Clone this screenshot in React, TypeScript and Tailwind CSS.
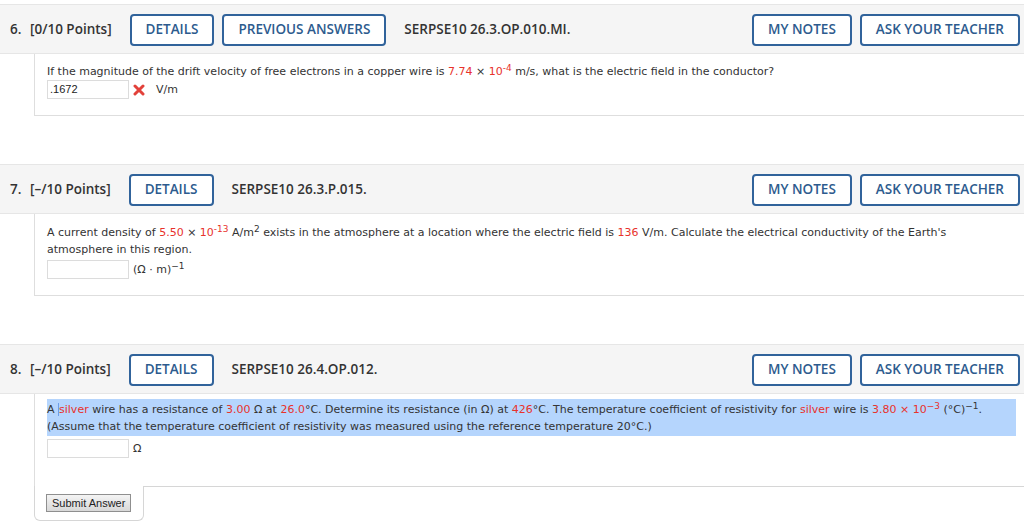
import React from "react";

const body = { fontFamily: '"DejaVu Sans", Verdana, sans-serif' };
const head = { fontFamily: '"Open Sans", "Liberation Sans", sans-serif' };

function NavButton({ label }: { label: string }) {
  return (
    <button
      className="h-[32px] px-[14px] pt-[1px] rounded-[4px] border-2 border-[#31639b] bg-white text-[13.5px] font-semibold text-[#2d5b8e] leading-none"
      style={head}
    >
      {label}
    </button>
  );
}

function Header({
  num,
  points,
  code,
  previous,
}: {
  num: string;
  points: string;
  code: string;
  previous?: boolean;
}) {
  return (
    <div
      className="h-[50px] flex items-center bg-[#f5f5f5] border-t border-b border-[#e6e6e6] pl-[10px] pr-[4px] pt-[1px] text-[#333]"
      style={head}
    >
      <span className="text-[13.5px] font-semibold w-[20px]">{num}</span>
      <span className="text-[13.5px] font-semibold">{points}</span>
      <div className="ml-[18px] flex gap-[8px]">
        <NavButton label="DETAILS" />
        {previous && <NavButton label="PREVIOUS ANSWERS" />}
      </div>
      <span className="ml-[18px] text-[13.5px] font-semibold">{code}</span>
      <div className="ml-auto flex gap-[8px]">
        <NavButton label="MY NOTES" />
        <NavButton label="ASK YOUR TEACHER" />
      </div>
    </div>
  );
}

function Red({ children }: { children: React.ReactNode }) {
  return <span className="text-[#e8322b]">{children}</span>;
}

function Sup({ children, red }: { children: React.ReactNode; red?: boolean }) {
  return <sup className={`text-[9px] ${red ? "text-[#e8322b]" : ""}`}>{children}</sup>;
}

function AnswerBox({ value }: { value?: string }) {
  return (
    <div
      className="w-[82px] h-[19px] border border-[#dcdcdc] bg-white flex items-center px-[2px] text-[11px] text-[#222]"
      style={{ fontFamily: '"Liberation Sans", Arial, sans-serif' }}
    >
      {value}
    </div>
  );
}

function WrongMark() {
  return (
    <svg width="12" height="12" viewBox="0 0 12 12" className="ml-[4px]">
      <path d="M2 2 L10 10 M10 2 L2 10" stroke="#e2413a" strokeWidth="3" strokeLinecap="round" />
    </svg>
  );
}

export default function App() {
  return (
    <div className="w-[1024px] h-[531px] bg-white overflow-hidden pt-[4px] text-[#333]">
      {/* Question 6 */}
      <Header num="6." points="[0/10 Points]" code="SERPSE10 26.3.OP.010.MI." previous />
      <div className="ml-[34px] border-l border-b border-[#dedede] pl-[12px] pt-[9px] pb-[16px] text-[11px] leading-[17px]" style={body}>
        <p>
          If the magnitude of the drift velocity of free electrons in a copper wire is <Red>7.74</Red> × <Red>10</Red>
          <Sup red>-4</Sup> m/s, what is the electric field in the conductor?
        </p>
        <div className="flex items-center">
          <AnswerBox value=".1672" />
          <WrongMark />
          <span className="ml-[11px]">V/m</span>
        </div>
      </div>

      {/* Question 7 */}
      <div className="mt-[48px]">
        <Header num="7." points="[–/10 Points]" code="SERPSE10 26.3.P.015." />
      </div>
      <div className="ml-[34px] border-l border-b border-[#dedede] pl-[12px] pr-[8px] pt-[10px] pb-[16px] text-[11px] leading-[17px]" style={body}>
        <p>
          A current density of <Red>5.50</Red> × <Red>10</Red>
          <Sup red>-13</Sup> A/m<Sup>2</Sup> exists in the atmosphere at a location where the electric field is{" "}
          <Red>136</Red> V/m. Calculate the electrical conductivity of the Earth's
          <br />
          atmosphere in this region.
        </p>
        <div className="flex items-center mt-[2px]">
          <AnswerBox />
          <span className="ml-[4px]">
            (Ω · m)<Sup>−1</Sup>
          </span>
        </div>
      </div>

      {/* Question 8 */}
      <div className="mt-[48px]">
        <Header num="8." points="[–/10 Points]" code="SERPSE10 26.4.OP.012." />
      </div>
      <div className="ml-[34px] border-l border-[#dedede] pl-[12px] pr-[8px] pt-[5px] h-[92px] text-[11px] leading-[17px]" style={body}>
        <p className="bg-[#b5d5fd] pt-[2px] pb-[1px]">
          A <span className="border-l border-[#6d9ee8]" />
          <Red>silver</Red> wire has a resistance of <Red>3.00</Red> Ω at <Red>26.0</Red>°C. Determine its resistance (in Ω) at{" "}
          <Red>426</Red>°C. The temperature coefficient of resistivity for <Red>silver</Red> wire is{" "}
          <Red>3.80 × 10</Red>
          <Sup red>−3</Sup> (°C)<Sup>−1</Sup>.
          <br />
          (Assume that the temperature coefficient of resistivity was measured using the reference temperature 20°C.)
        </p>
        <div className="flex items-center mt-[3px]">
          <AnswerBox />
          <span className="ml-[4px]">Ω</span>
        </div>
      </div>
      <div className="flex">
        <div className="ml-[34px] w-[110px] h-[35px] border-l border-r border-b border-[#d6d6d6] rounded-b-[6px] pl-[11px] pt-[8px] flex items-start">
          <button
            className="h-[18px] px-[5px] border border-[#8f8f8f] bg-gradient-to-b from-[#f4f4f4] to-[#d8d8d8] text-[11px] text-[#222] leading-none"
            style={{ fontFamily: '"Liberation Sans", Arial, sans-serif' }}
          >
            Submit Answer
          </button>
        </div>
        <div className="flex-1 border-t border-[#d6d6d6]" />
      </div>
    </div>
  );
}
